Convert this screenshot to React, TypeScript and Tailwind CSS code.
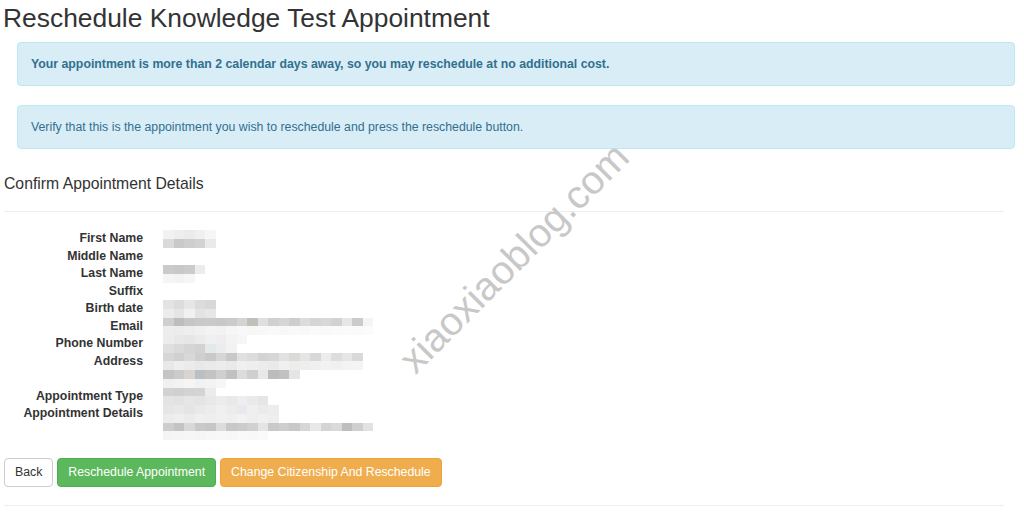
import React from 'react';

// pixelated (blurred) values, two strips per line
type Row = { label: string; top: string[]; bottom: string[] };

const rows: Row[] = [
    { label: 'First Name', top: ['#f2f2f2', '#eeeeee', '#ebebeb', '#f0f0f0', '#f6f6f6'], bottom: ['#dadada', '#c9c9c9', '#cecece', '#d2d2d2', '#eaeaea'] },
    { label: 'Middle Name', top: [], bottom: [] },
    { label: 'Last Name', top: ['#cacaca', '#c8c8c8', '#cbcbcb', '#ececec'], bottom: ['#f5f5f5', '#f3f3f3', '#f6f6f6'] },
    { label: 'Suffix', top: [], bottom: [] },
    { label: 'Birth date', top: ['#e3e3e3', '#dcdcdc', '#e6e6e6', '#dcdcdc', '#d8d8d8'], bottom: ['#ececec', '#e5e5e5', '#f1f1f1', '#e3e3e3', '#e7e7e7'] },
    {
        label: 'Email',
        top: ['#cfcfcf', '#bdbdbd', '#c4c6c8', '#c9c9c9', '#cacaca', '#c6c8ca', '#cbcbcb', '#d4d4d4', '#c2bfbb', '#dde0e3', '#d0d0d0', '#d6d6d6', '#cecece', '#dcdcdc', '#d5d5d5', '#d8d8d8', '#d2d2d2', '#e6e6e6', '#cbcbcb', '#f4f4f4'],
        bottom: ['#ededed', '#ececec', '#eeeeee', '#f0f0f0', '#f3f3f3', '#f2f2f2', '#f6f6f6', '#f8f8f8', '#f7f7f7', '#f8f8f8', '#f9f9f9', '#f8f8f8', '#f9f9f9', '#f8f8f8', '#fafafa', '#f9f9f9', '#fafafa', '#fbfbfb', '#fafafa', '#fbfbfb'],
    },
    {
        label: 'Phone Number',
        top: ['#ececec', '#e8e8e8', '#e6e6e6', '#ebebeb', '#f0f0f0', '#eeeeee', '#f3f3f3', '#f6f6f6'],
        bottom: ['#dfdfdf', '#dadada', '#d5d5d5', '#d2d2d2', '#e3e8ea', '#ececec', '#f2f2f2'],
    },
    {
        label: 'Address',
        top: ['#d6d6d6', '#d0d0d0', '#d8d8d8', '#cfcfcf', '#c9c9c9', '#d6d6d6', '#c8c8c8', '#e0e0e0', '#dcdcdc', '#d3d3d3', '#d6d6d6', '#e2e2e2', '#dcdad8', '#e3e5e7', '#d8d8d8', '#ececec', '#dddddd', '#e6e6e6', '#d9d9d9'],
        bottom: ['#e8e8e8', '#eeeeee', '#ebebeb', '#e8e8e8', '#eaeaea', '#ececec', '#e9e9e9', '#f0f0f0', '#eeeeee', '#ececec', '#eaeaea', '#f0f0f0', '#eeedeb', '#eeeeee', '#efefef', '#f2f2f2', '#f0f0f0', '#f3f3f3', '#f4f4f4'],
    },
    {
        label: '',
        top: ['#c4c4c4', '#cbcbcb', '#d8d4cf', '#b9bfc3', '#c3c3c3', '#cfcfcf', '#c1c1c1', '#dcdcdc', '#cfcfcf', '#e8e8e8', '#bcbcbc', '#c1c1c1', '#e5e5e5'],
        bottom: ['#f0f0f0', '#f2f2f2', '#f5f5f5', '#f1f1f1', '#f3f3f3', '#f6f6f6'],
    },
    {
        label: 'Appointment Type',
        top: ['#d2d2d2', '#d0d0d0', '#d3d3d3', '#d4d4d4', '#ececec'],
        bottom: ['#e4e4e4', '#e2e2e2', '#e6e6e6', '#e4e4e4', '#e8e8e8', '#ececec', '#e9e9e9', '#eeeeee', '#eaeaea', '#e6e6e6'],
    },
    {
        label: 'Appointment Details',
        top: ['#e6e6e6', '#e8e8e8', '#e5e5e5', '#e9e9e9', '#ececec', '#f0f0f0', '#ececec', '#e6eaee', '#efefef', '#ebebeb', '#ededed'],
        bottom: ['#ececec', '#eeeeee', '#ebebeb', '#efefef', '#eeeeee', '#f0f0f0', '#efefef', '#f2f2f2', '#eeeeee', '#f0f0f0', '#eeeeee'],
    },
    {
        label: '',
        top: ['#cdcdcd', '#c3c3c3', '#d8d8d8', '#c9c9c9', '#c6c6c6', '#dcdcdc', '#c8c8c8', '#cbcbcb', '#d1d1d1', '#e4e4e4', '#c9c9c9', '#cecece', '#c8c8c8', '#d6d6d6', '#e8e8e8', '#d4d4d4', '#dcd9d6', '#bebebe', '#cfcfcf', '#e2e2e2'],
        bottom: ['#f4f4f4', '#f5f5f5', '#f6f6f6', '#f5f5f5', '#f7f7f7', '#f8f8f8', '#f7f7f7', '#f9f9f9', '#f8f8f8', '#fafafa'],
    },
];

const Strip: React.FC<{ cells: string[] }> = ({ cells }) => (
    <div className="flex h-[8.75px]">
        {cells.map((c, i) => (
            <span key={i} className="block h-full w-[10.5px]" style={{ backgroundColor: c }} />
        ))}
    </div>
);

const App: React.FC = () => {
    return (
        <div className="relative min-h-[518px] overflow-hidden bg-white font-['Liberation_Sans',Arial,sans-serif] text-[12.3px] text-[#333]">
            <h1 className="pl-[3px] pt-[3px] text-[26.4px] leading-[30px] font-normal">Reschedule Knowledge Test Appointment</h1>

            <div className="ml-[17px] mr-[9px] mt-[9px] rounded-[4px] border border-[#bce8f1] bg-[#d9edf7] px-[13px] py-[12px] leading-[18px] text-[#31708f]">
                <strong className="font-bold">Your appointment is more than 2 calendar days away, so you may reschedule at no additional cost.</strong>
            </div>

            <div className="ml-[17px] mr-[9px] mt-[19px] rounded-[4px] border border-[#bce8f1] bg-[#d9edf7] px-[13px] py-[12px] leading-[18px] text-[#31708f]">
                Verify that this is the appointment you wish to reschedule and press the reschedule button.
            </div>

            <h3 className="mt-[26px] pl-[4px] text-[15.75px] leading-[18px] font-normal">Confirm Appointment Details</h3>
            <hr className="ml-[4px] mr-[20px] mt-[18px] border-0 border-t border-[#eeeeee]" />

            <dl className="mt-[18px]">
                {rows.map((r, i) => (
                    <div key={i} className="flex h-[17.5px]">
                        <dt className="w-[143px] shrink-0 text-right font-bold leading-[17.5px]">{r.label}</dt>
                        <dd className="ml-[20px]">
                            <Strip cells={r.top} />
                            <Strip cells={r.bottom} />
                        </dd>
                    </div>
                ))}
            </dl>

            <div className="mt-[18px] flex gap-[4px] pl-[4px]">
                <button className="rounded-[4px] border border-[#cccccc] bg-white px-[10px] py-[5px] leading-[17px] text-[#333]">Back</button>
                <button className="rounded-[4px] border border-[#4cae4c] bg-[#5cb85c] px-[10px] py-[5px] leading-[17px] text-white">Reschedule Appointment</button>
                <button className="rounded-[4px] border border-[#eea236] bg-[#f0ad4e] px-[10px] py-[5px] leading-[17px] text-white">Change Citizenship And Reschedule</button>
            </div>

            <hr className="ml-[4px] mr-[20px] mt-[18px] border-0 border-t border-[#eeeeee]" />

            {/* watermark */}
            <div className="pointer-events-none absolute left-[514px] top-[258px] -translate-x-1/2 -translate-y-1/2 -rotate-45 whitespace-nowrap text-[39.5px] leading-none text-[#c8c8c8]">
                xiaoxiaoblog.com
            </div>
        </div>
    );
};

export default App;
